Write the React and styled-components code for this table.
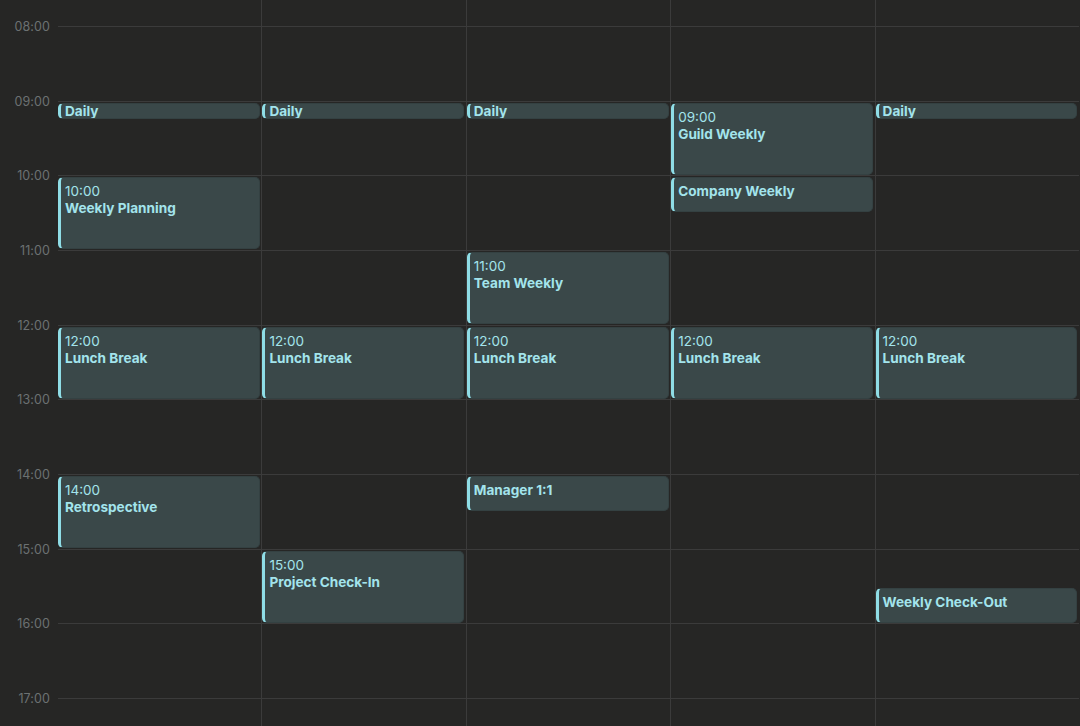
import React from "react";
import styled, { createGlobalStyle } from "styled-components";

const HOUR = 74.667;
const TOP = 26;
const FIRST_HOUR = 8;

const GlobalStyle = createGlobalStyle`
  html, body { margin: 0; padding: 0; background: #262625; }
  body { font-family: Inter, "Noto Sans", "Liberation Sans", sans-serif; -webkit-font-smoothing: antialiased; }
  * { box-sizing: border-box; }
`;

const Screen = styled.div`
  height: 726px;
  overflow: hidden;
  background: #262625;
`;

const Grid = styled.div`
  display: grid;
  grid-template-columns: 57px repeat(5, 1fr);
  padding-right: 1px;
  height: 100%;
`;

const Gutter = styled.div`
  display: flex;
  flex-direction: column;
`;

const Spacer = styled.div`
  height: ${TOP}px;
  flex: none;
`;

const HourLabelRow = styled.div`
  height: ${HOUR}px;
  flex: none;
  display: flex;
  justify-content: flex-end;
  padding-right: 7px;
`;

const HourLabel = styled.span`
  margin-top: -7px;
  height: 16px;
  line-height: 16px;
  font-size: 12.5px;
  color: #6c7172;
  letter-spacing: 0.1px;
`;

const DayColumn = styled.div`
  position: relative;
  display: flex;
  flex-direction: column;
  border-left: 1px solid ${(p) => (p.$first ? "transparent" : "#3b3b3b")};
`;

const HourSlot = styled.div`
  height: ${HOUR}px;
  flex: none;
  border-top: 1px solid #3b3b3b;
`;

const Event = styled.div`
  position: absolute;
  left: 0;
  right: 1.5px;
  background: #3a4849;
  border: 1px solid #344142;
  border-left: 3px solid #8fdde6;
  border-radius: 5px;
  padding: ${(p) => (p.$compact ? "0 4px" : "5px 4px 4px")};
  overflow: hidden;
  color: #a3e4ec;
  font-size: 13.5px;
  line-height: 17px;
`;

const EventTime = styled.div`
  font-weight: 400;
`;

const EventTitle = styled.div`
  font-weight: 700;
  font-size: 13.6px;
  white-space: nowrap;
  ${(p) => p.$compact && "line-height: 15px;"}
`;

const hours = [8, 9, 10, 11, 12, 13, 14, 15, 16, 17];

const days = [
  [
    { s: 9, e: 9.25, t: "Daily" },
    { s: 10, e: 11, t: "Weekly Planning" },
    { s: 12, e: 13, t: "Lunch Break" },
    { s: 14, e: 15, t: "Retrospective" },
  ],
  [
    { s: 9, e: 9.25, t: "Daily" },
    { s: 12, e: 13, t: "Lunch Break" },
    { s: 15, e: 16, t: "Project Check-In" },
  ],
  [
    { s: 9, e: 9.25, t: "Daily" },
    { s: 11, e: 12, t: "Team Weekly" },
    { s: 12, e: 13, t: "Lunch Break" },
    { s: 14, e: 14.5, t: "Manager 1:1" },
  ],
  [
    { s: 9, e: 10, t: "Guild Weekly" },
    { s: 10, e: 10.5, t: "Company Weekly" },
    { s: 12, e: 13, t: "Lunch Break" },
  ],
  [
    { s: 9, e: 9.25, t: "Daily" },
    { s: 12, e: 13, t: "Lunch Break" },
    { s: 15.5, e: 16, t: "Weekly Check-Out" },
  ],
];

const fmt = (h) => {
  const hh = Math.floor(h);
  const mm = Math.round((h - hh) * 60);
  return `${String(hh).padStart(2, "0")}:${String(mm).padStart(2, "0")}`;
};

export default function App() {
  return (
    <Screen>
      <GlobalStyle />
      <Grid>
        <Gutter>
          <Spacer />
          {hours.map((h) => (
            <HourLabelRow key={h}>
              <HourLabel>{fmt(h)}</HourLabel>
            </HourLabelRow>
          ))}
        </Gutter>
        {days.map((events, i) => (
          <DayColumn key={i} $first={i === 0}>
            <Spacer />
            {hours.map((h) => (
              <HourSlot key={h} />
            ))}
            {events.map((ev, j) => {
              const dur = ev.e - ev.s;
              const compact = dur < 0.5;
              const top = TOP + (ev.s - FIRST_HOUR) * HOUR + 2;
              const height = dur * HOUR - 2.5;
              return (
                <Event key={j} $compact={compact} style={{ top, height }}>
                  {dur >= 1 && <EventTime>{fmt(ev.s)}</EventTime>}
                  <EventTitle $compact={compact}>{ev.t}</EventTitle>
                </Event>
              );
            })}
          </DayColumn>
        ))}
      </Grid>
    </Screen>
  );
}
